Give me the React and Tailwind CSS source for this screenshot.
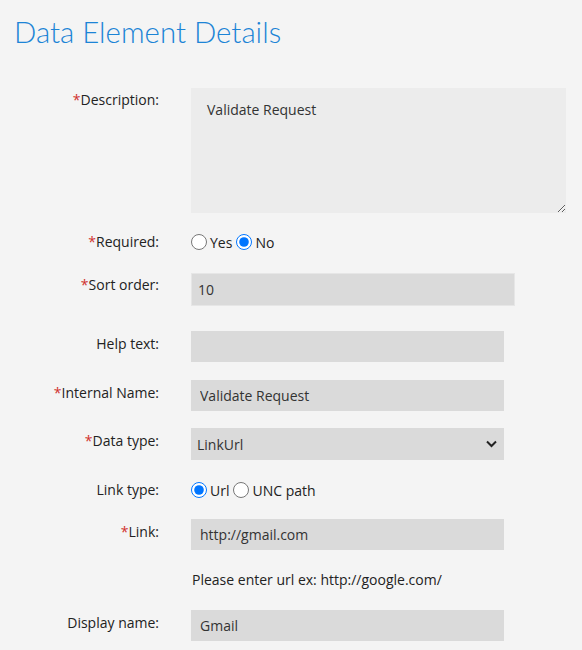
import { useState } from 'react';

const FONT = { fontFamily: '"Open Sans", "Noto Sans", sans-serif' };

function Label({ children, required, className = '' }) {
  return (
    <div className={`w-[159px] shrink-0 text-right text-[14px] leading-[20px] text-[#222] ${className}`}>
      {required && <span className="text-[#d0312d]">*</span>}
      {children}
    </div>
  );
}

function TextInput({ value, width = 'w-[313px]' }) {
  return (
    <input
      readOnly
      value={value}
      className={`${width} h-[31px] bg-[#dadada] px-[9px] text-[14px] text-[#333] outline-none`}
    />
  );
}

function Radio({ checked, label, onChange }) {
  return (
    <label className="mr-[2px] flex items-center gap-[3px]">
      <input
        type="radio"
        checked={checked}
        onChange={onChange}
        className="m-0 h-[16px] w-[16px] accent-[#0075ff]"
      />
      <span>{label}</span>
    </label>
  );
}

export default function App() {
  const [required, setRequired] = useState('no');
  const [linkType, setLinkType] = useState('url');

  return (
    <div className="min-h-[650px] bg-[#f4f4f4] pt-[14px]" style={FONT}>
      <h1
        className="ml-[14px] text-[29.4px] font-light leading-[36px] text-[#1c84d6]"
        style={{ fontFamily: 'Lato, sans-serif' }}
      >
        Data Element Details
      </h1>

      <div className="mt-[38px] flex flex-col text-[14px] text-[#222]">
        {/* description */}
        <div className="flex">
          <Label required className="pt-[2px]">Description:</Label>
          <textarea
            readOnly
            value="Validate Request"
            className="ml-[32px] h-[125px] w-[375px] bg-[#ececec] px-[16px] py-[12px] text-[14px] leading-[20px] text-[#333] outline-none"
          />
        </div>

        {/* required */}
        <div className="mt-[19px] flex h-[20px] items-center">
          <Label required>Required:</Label>
          <div className="ml-[32px] flex items-center gap-[2px] text-[14px]">
            <Radio label="Yes" checked={required === 'yes'} onChange={() => setRequired('yes')} />
            <Radio label="No" checked={required === 'no'} onChange={() => setRequired('no')} />
          </div>
        </div>

        {/* sort order */}
        <div className="mt-[21px] flex">
          <Label required className="pt-[2px]">Sort order:</Label>
          <input
            readOnly
            value="10"
            className="ml-[32px] h-[33px] w-[324px] border border-[#e6e6e6] bg-[#dadada] px-[6px] text-[14px] text-[#333] outline-none"
          />
        </div>

        <div className="mt-[25px] flex">
          <Label className="pt-[3px]">Help text:</Label>
          <div className="ml-[32px]"><TextInput value="" /></div>
        </div>

        <div className="mt-[18px] flex">
          <Label required className="pt-[3px]">Internal Name:</Label>
          <div className="ml-[32px]"><TextInput value="Validate Request" /></div>
        </div>

        {/* data type */}
        <div className="mt-[17px] flex">
          <Label required className="pt-[3px]">Data type:</Label>
          <div className="relative ml-[32px]">
            <select
              defaultValue="LinkUrl"
              className="h-[32px] w-[313px] appearance-none bg-[#dadada] px-[6px] text-[14px] text-[#333] outline-none"
            >
              <option>LinkUrl</option>
              <option>Text</option>
              <option>Number</option>
            </select>
            <svg
              className="pointer-events-none absolute right-[7px] top-[12px]"
              width="11"
              height="8"
              viewBox="0 0 11 8"
            >
              <path d="M1 1.5 L5.5 6 L10 1.5" fill="none" stroke="#222" strokeWidth="2" />
            </svg>
          </div>
        </div>

        {/* link type */}
        <div className="mt-[20px] flex h-[20px] items-center">
          <Label>Link type:</Label>
          <div className="ml-[32px] flex items-center gap-[2px] text-[14px]">
            <Radio label="Url" checked={linkType === 'url'} onChange={() => setLinkType('url')} />
            <Radio label="UNC path" checked={linkType === 'unc'} onChange={() => setLinkType('unc')} />
          </div>
        </div>

        <div className="mt-[19px] flex">
          <Label required className="pt-[3px]">Link:</Label>
          <div className="ml-[32px]"><TextInput value="http://gmail.com" /></div>
        </div>

        <div className="mt-[20px] ml-[192px] leading-[20px]">
          Please enter url ex: http://google.com/
        </div>

        <div className="mt-[20px] flex">
          <Label className="pt-[3px]">Display name:</Label>
          <div className="ml-[32px]"><TextInput value="Gmail" /></div>
        </div>
      </div>
    </div>
  );
}
